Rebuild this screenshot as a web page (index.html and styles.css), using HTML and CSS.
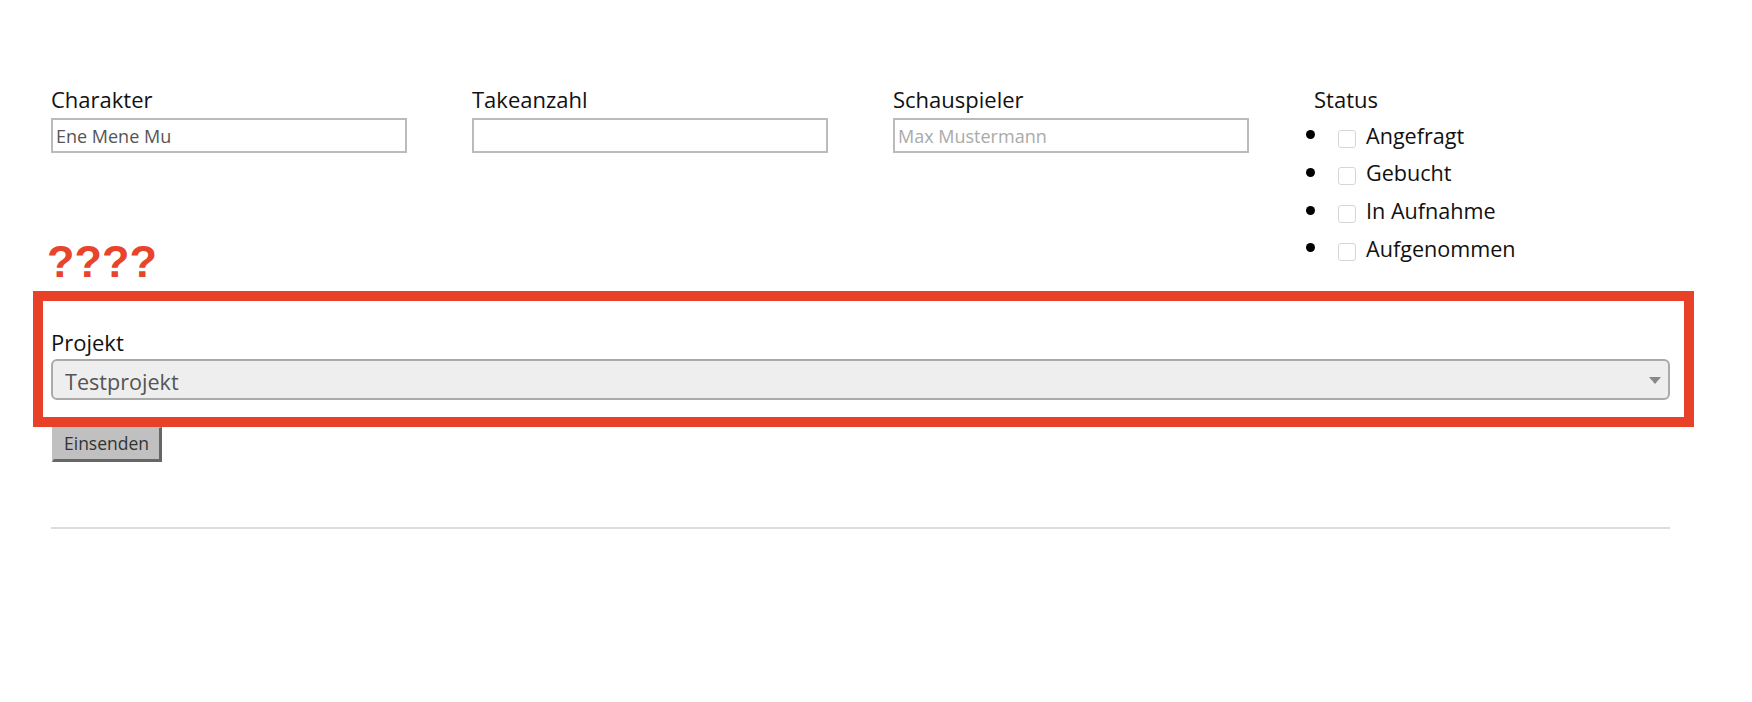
FILE: index.html
```html
<!DOCTYPE html>
<html lang="de">
<head>
    <meta charset="utf-8"/>
    <title>Take anlegen</title>
    <link rel="stylesheet" href="styles.css">
</head>
<body>
<div id="page">
    <form id="take_form">
        <div class="fields">
            <div class="field">
                <label for="character">Charakter</label>
                <input id="character" type="text" name="character" value="Ene Mene Mu"/>
            </div>
            <div class="field">
                <label for="takes">Takeanzahl</label>
                <input id="takes" type="text" name="takes"/>
            </div>
            <div class="field">
                <label for="actor">Schauspieler</label>
                <input id="actor" type="text" name="actor" placeholder="Max Mustermann"/>
            </div>
            <div class="field status">
                <span class="label">Status</span>
                <ul>
                    <li><input type="checkbox" name="status" value="1"/>Angefragt</li>
                    <li><input type="checkbox" name="status" value="2"/>Gebucht</li>
                    <li><input type="checkbox" name="status" value="3"/>In Aufnahme</li>
                    <li><input type="checkbox" name="status" value="4"/>Aufgenommen</li>
                </ul>
            </div>
        </div>

        <div class="marked">
            <span class="marked_tag">????</span>
            <label for="project">Projekt</label>
            <div class="select_wrap">
                <select id="project" name="project">
                    <option>Testprojekt</option>
                </select>
            </div>
        </div>

        <button type="submit">Einsenden</button>
    </form>
    <div class="rule"></div>
</div>
</body>
</html>
```

FILE: styles.css
```css
*{
    padding: 0;
    margin: 0;
    box-sizing: border-box;
}

body{
    font-family: "Open Sans", "DejaVu Sans", sans-serif;
    font-size: 18px;
    color: #111;
    background: #fff;
}

#page{
    padding: 85px 82px 0 51px;
}

.fields{
    display: grid;
    grid-template-columns: repeat(4, 1fr);
    column-gap: 65px;
    align-items: start;
}

.field label,
.field .label,
.marked label{
    display: block;
    font-size: 22px;
    line-height: 29.4px;
    color: #111;
}

.field input[type="text"]{
    display: block;
    width: 100%;
    height: 35px;
    margin-top: 4px;
    padding: 0 3px;
    border: 2px solid #bbb;
    font-family: inherit;
    font-size: 18px;
    color: #555;
    background: #fff;
    outline: none;
}

.field input::placeholder{
    color: #aaa;
}

/* status list */
.status ul{
    list-style: none;
    margin-top: 2px;
}

.status li{
    display: flex;
    align-items: center;
    height: 37.7px;
    font-size: 21.6px;
}

.status li::before{
    content: "";
    width: 9px;
    height: 9px;
    border-radius: 50%;
    background: #000;
    margin: -1px 23px 0 -8px;
    flex: none;
}

.status input[type="checkbox"]{
    appearance: none;
    -webkit-appearance: none;
    width: 18px;
    height: 18px;
    margin: 7px 10px 0 0;
    border: 1px solid #d6d6d6;
    border-radius: 3px;
    background: #fff;
    flex: none;
}

/* red marking round the project field */
.marked{
    position: relative;
    margin: 24px -24px 0 -18px;
    padding: 27px 14px 17px 8px;
    border: 10px solid #e9402a;
}

.marked_tag{
    position: absolute;
    left: 4px;
    bottom: calc(100% + 17px);
    font-family: "Liberation Sans", Arial, sans-serif;
    font-weight: bold;
    font-size: 45px;
    line-height: 1;
    color: #e8432b;
}

.marked label{
    margin-bottom: 1px;
}

.select_wrap{
    position: relative;
}

.select_wrap select{
    appearance: none;
    -webkit-appearance: none;
    display: block;
    width: 100%;
    height: 41px;
    padding: 5px 30px 0 12px;
    border: 2px solid #aaa;
    border-radius: 6px;
    background: #eee;
    font-family: inherit;
    font-size: 21.6px;
    color: #555;
    outline: none;
}

.select_wrap::after{
    content: "";
    position: absolute;
    right: 9px;
    top: 18px;
    border-left: 6px solid transparent;
    border-right: 6px solid transparent;
    border-top: 7px solid #888;
}

#take_form button{
    display: block;
    height: 35px;
    padding: 0 10px;
    border-style: solid;
    border-width: 1px 3px 3px 2px;
    border-color: #c0c0c0 #666 #666 #c0c0c0;
    background: #c0c0c0;
    font-family: inherit;
    font-size: 17.5px;
    color: #333;
    margin-left: 1px;
}

.rule{
    height: 2px;
    margin-top: 65px;
    background: #ddd;
}
```
